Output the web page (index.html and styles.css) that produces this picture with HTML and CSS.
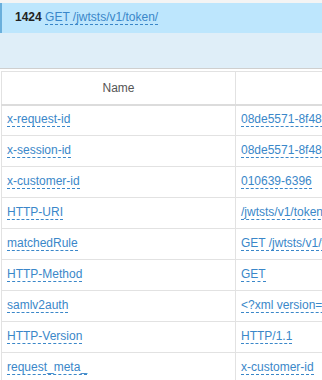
FILE: index.html
```html
<!DOCTYPE html>
<html lang="en">
  <head>
    <meta charset="UTF-8" />
    <title>Request 1424</title>
    <link rel="stylesheet" href="styles.css">
  </head>
  <body>
    <div class="request-panel">
      <div class="request-title">
        <span class="request-id">1424</span>
        <span class="link">GET /jwtsts/v1/token/</span>
      </div>
      <div class="request-toolbar"></div>
    </div>

    <div class="table-wrap">
      <table class="headers-table">
        <thead>
          <tr>
            <th class="col-name">Name</th>
            <th class="col-value"></th>
          </tr>
        </thead>
        <tbody>
          <tr>
            <td><span class="link">x-request-id</span></td>
            <td><span class="link">08de5571-8f48-4c1e-9a6b-3f0d2e7a11c4</span></td>
          </tr>
          <tr>
            <td><span class="link">x-session-id</span></td>
            <td><span class="link">08de5571-8f48-4c1e-9a6b-3f0d2e7a11c4</span></td>
          </tr>
          <tr>
            <td><span class="link">x-customer-id</span></td>
            <td><span class="link">010639-6396</span></td>
          </tr>
          <tr>
            <td><span class="link">HTTP-URI</span></td>
            <td><span class="link">/jwtsts/v1/token/</span></td>
          </tr>
          <tr>
            <td><span class="link">matchedRule</span></td>
            <td><span class="link">GET /jwtsts/v1/token/</span></td>
          </tr>
          <tr>
            <td><span class="link">HTTP-Method</span></td>
            <td><span class="link">GET</span></td>
          </tr>
          <tr>
            <td><span class="link">samlv2auth</span></td>
            <td><span class="link">&lt;?xml version="1.0" encoding="UTF-8"?&gt;</span></td>
          </tr>
          <tr>
            <td><span class="link">HTTP-Version</span></td>
            <td><span class="link">HTTP/1.1</span></td>
          </tr>
          <tr>
            <td><span class="link">request_meta_</span></td>
            <td><span class="link">x-customer-id</span></td>
          </tr>
        </tbody>
      </table>
    </div>
  </body>
</html>
```

FILE: styles.css
```css
* {
  margin: 0;
  padding: 0;
  box-sizing: border-box;
}

body {
  font-family: "Liberation Sans", Arial, sans-serif;
  font-size: 12px;
  color: #333;
  background: #fff;
  overflow: hidden;
  padding-top: 3px;
  background: linear-gradient(#f4f4f4 0, #f4f4f4 3px, #fff 3px);
}

.link {
  color: #3a87c9;
  border-bottom: 1px dashed #3a87c9;
}

.request-panel {
  background: #dfeef8;
  border-bottom: 1px solid #cfcfcf;
}

.request-title {
  height: 30px;
  line-height: 29px;
  padding-left: 13px;
  background: #bde6fd;
  border-left: 2px solid #6aafdc;
  white-space: nowrap;
}

.request-id {
  font-weight: bold;
  color: #222;
}

.request-toolbar {
  height: 35px;
}

.table-wrap {
  margin-top: 2px;
  padding-left: 1px;
  overflow: hidden;
}

.headers-table {
  border-collapse: collapse;
  width: 500px;
  table-layout: fixed;
  white-space: nowrap;
}

.headers-table th,
.headers-table td {
  border: 1px solid #e2e2e2;
  text-align: left;
  overflow: hidden;
}

.headers-table th {
  height: 33px;
  font-weight: normal;
  color: #555;
  text-align: center;
  border-bottom: 2px solid #dcdcdc;
}

.col-name {
  width: 234px;
}

.headers-table td {
  height: 31px;
  padding: 0 5px 2px;
}
```
